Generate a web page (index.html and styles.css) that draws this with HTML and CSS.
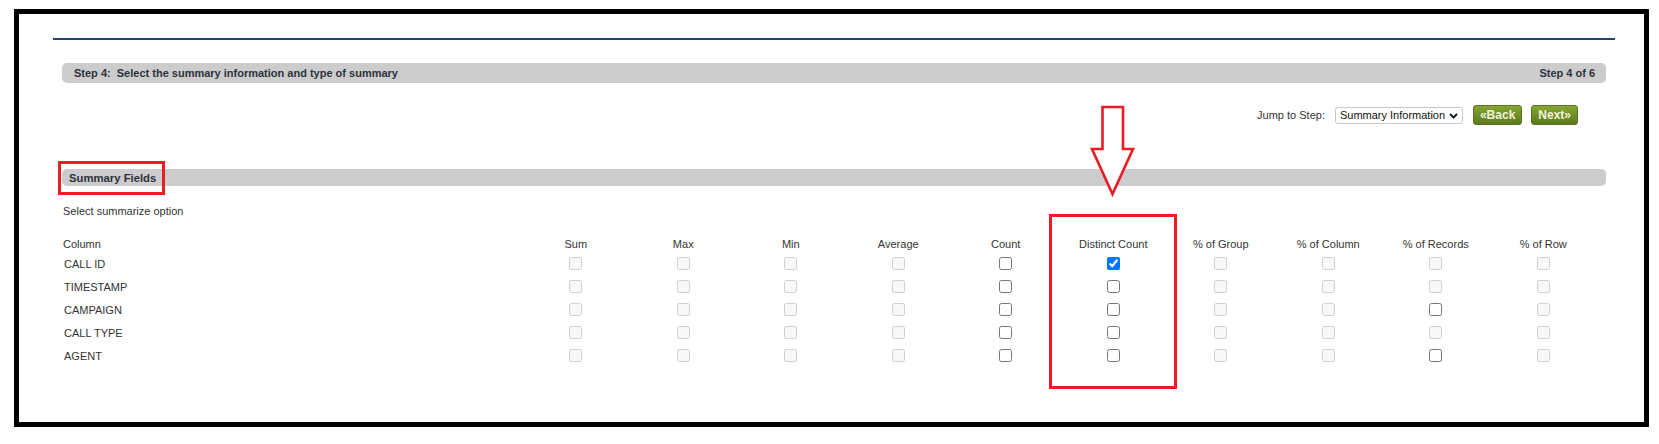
FILE: index.html
```html
<!DOCTYPE html>
<html lang="en">
<head>
<meta charset="utf-8">
<title>Summary Information</title>
<link rel="stylesheet" href="styles.css">
</head>
<body>
<div class="frame">
  <div class="rule"></div>
  <div class="content">
    <div class="bar step-bar">
      <span>Step 4:&nbsp; Select the summary information and type of summary</span>
      <span>Step 4 of 6</span>
    </div>
    <div class="jump-row">
      <label class="jump-label" for="jump">Jump to Step:</label>
      <div class="select-wrap">
        <select id="jump" class="jump-select">
          <option>Summary Information</option>
        </select>
        <svg class="chevron" width="9" height="6" viewBox="0 0 9 6">
          <path d="M1 1 L4.5 4.5 L8 1" fill="none" stroke="#111111" stroke-width="1.8"/>
        </svg>
      </div>
      <button class="btn">«Back</button>
      <button class="btn">Next»</button>
    </div>
    <div class="bar section-bar">Summary Fields</div>
    <p class="hint">Select summarize option</p>
    <div class="grid">
      <div class="hd label">Column</div>
      <div class="hd">Sum</div>
      <div class="hd">Max</div>
      <div class="hd">Min</div>
      <div class="hd">Average</div>
      <div class="hd">Count</div>
      <div class="hd">Distinct Count</div>
      <div class="hd">% of Group</div>
      <div class="hd">% of Column</div>
      <div class="hd">% of Records</div>
      <div class="hd">% of Row</div>

      <div class="cell label name">CALL ID</div>
      <div class="cell"><input type="checkbox" disabled></div>
      <div class="cell"><input type="checkbox" disabled></div>
      <div class="cell"><input type="checkbox" disabled></div>
      <div class="cell"><input type="checkbox" disabled></div>
      <div class="cell"><input type="checkbox"></div>
      <div class="cell"><input type="checkbox" checked></div>
      <div class="cell"><input type="checkbox" disabled></div>
      <div class="cell"><input type="checkbox" disabled></div>
      <div class="cell"><input type="checkbox" disabled></div>
      <div class="cell"><input type="checkbox" disabled></div>

      <div class="cell label name">TIMESTAMP</div>
      <div class="cell"><input type="checkbox" disabled></div>
      <div class="cell"><input type="checkbox" disabled></div>
      <div class="cell"><input type="checkbox" disabled></div>
      <div class="cell"><input type="checkbox" disabled></div>
      <div class="cell"><input type="checkbox"></div>
      <div class="cell"><input type="checkbox"></div>
      <div class="cell"><input type="checkbox" disabled></div>
      <div class="cell"><input type="checkbox" disabled></div>
      <div class="cell"><input type="checkbox" disabled></div>
      <div class="cell"><input type="checkbox" disabled></div>

      <div class="cell label name">CAMPAIGN</div>
      <div class="cell"><input type="checkbox" disabled></div>
      <div class="cell"><input type="checkbox" disabled></div>
      <div class="cell"><input type="checkbox" disabled></div>
      <div class="cell"><input type="checkbox" disabled></div>
      <div class="cell"><input type="checkbox"></div>
      <div class="cell"><input type="checkbox"></div>
      <div class="cell"><input type="checkbox" disabled></div>
      <div class="cell"><input type="checkbox" disabled></div>
      <div class="cell"><input type="checkbox"></div>
      <div class="cell"><input type="checkbox" disabled></div>

      <div class="cell label name">CALL TYPE</div>
      <div class="cell"><input type="checkbox" disabled></div>
      <div class="cell"><input type="checkbox" disabled></div>
      <div class="cell"><input type="checkbox" disabled></div>
      <div class="cell"><input type="checkbox" disabled></div>
      <div class="cell"><input type="checkbox"></div>
      <div class="cell"><input type="checkbox"></div>
      <div class="cell"><input type="checkbox" disabled></div>
      <div class="cell"><input type="checkbox" disabled></div>
      <div class="cell"><input type="checkbox" disabled></div>
      <div class="cell"><input type="checkbox" disabled></div>

      <div class="cell label name">AGENT</div>
      <div class="cell"><input type="checkbox" disabled></div>
      <div class="cell"><input type="checkbox" disabled></div>
      <div class="cell"><input type="checkbox" disabled></div>
      <div class="cell"><input type="checkbox" disabled></div>
      <div class="cell"><input type="checkbox"></div>
      <div class="cell"><input type="checkbox"></div>
      <div class="cell"><input type="checkbox" disabled></div>
      <div class="cell"><input type="checkbox" disabled></div>
      <div class="cell"><input type="checkbox"></div>
      <div class="cell"><input type="checkbox" disabled></div>
    </div>
  </div>
</div>

<div class="mark mark-fields"></div>
<div class="mark mark-distinct"></div>
<svg class="arrow" width="50" height="95" viewBox="0 0 50 95">
  <polygon points="14.5,4 35,4 35,46 45,46 24.5,91 4,46 14.5,46" fill="#ffffff" stroke="#ec1c24" stroke-width="2.6" stroke-linejoin="miter"/>
</svg>
</body>
</html>
```

FILE: styles.css
```css
html, body {
  margin: 0;
  padding: 0;
  background: #ffffff;
}

body {
  font-family: "Liberation Sans", Arial, sans-serif;
  font-size: 11px;
  color: #333333;
}

.frame {
  box-sizing: border-box;
  margin: 9px 0 0 14px;
  width: 1635px;
  height: 418px;
  border: 5px solid #000000;
  background: #ffffff;
}

.rule {
  margin: 24px 0 0 34px;
  width: 1562px;
  height: 2px;
  background: #22466a;
}

.content {
  margin-left: 43px;
  width: 1544px;
}

.bar {
  box-sizing: border-box;
  background: #cccccc;
  border-radius: 5px;
  font-weight: bold;
  color: #2e323c;
  display: flex;
  align-items: center;
}

.step-bar {
  margin-top: 23px;
  height: 20px;
  padding: 0 11px 0 12px;
  justify-content: space-between;
  font-size: 11px;
}

.jump-row {
  margin-top: 22px;
  height: 20px;
  display: flex;
  align-items: center;
  justify-content: flex-end;
  padding-right: 28px;
  gap: 10px;
}

.jump-label {
  color: #333333;
  font-size: 11px;
}

.select-wrap {
  position: relative;
  width: 128px;
  height: 17px;
}

.jump-select {
  box-sizing: border-box;
  -webkit-appearance: none;
  appearance: none;
  width: 128px;
  height: 17px;
  font-family: "Liberation Sans", Arial, sans-serif;
  font-size: 11px;
  line-height: 15px;
  color: #111111;
  background: #ffffff;
  border: 1px solid #c8c8c8;
  border-radius: 3px;
  padding: 0 14px 0 4px;
  margin: 0;
}

.chevron {
  position: absolute;
  right: 5px;
  top: 6px;
  pointer-events: none;
}

.btn {
  box-sizing: border-box;
  height: 20px;
  padding: 0 6px;
  font-family: "Liberation Sans", Arial, sans-serif;
  font-size: 12px;
  font-weight: bold;
  color: #eef3dc;
  background: linear-gradient(#86a533, #5c7a1b);
  border: 1px solid #5a7520;
  border-radius: 3px;
}

.btn + .btn {
  margin-left: -1px;
}

.section-bar {
  margin-top: 44px;
  height: 17px;
  padding-left: 7px;
  font-size: 11.3px;
}

.hint {
  margin: 18px 0 0 1px;
  height: 14px;
  line-height: 14px;
}

.grid {
  margin-top: 17px;
  display: grid;
  grid-template-columns: 460px repeat(10, 107.5px);
  grid-template-rows: 17px repeat(5, 23px);
  align-items: center;
}

.hd {
  text-align: center;
  line-height: 14px;
}

.hd.label {
  text-align: left;
  padding-left: 1px;
}

.cell {
  display: flex;
  justify-content: center;
  align-items: center;
  height: 23px;
}

.cell.label {
  justify-content: flex-start;
  padding-left: 2px;
}

.cell input {
  margin: 0;
  width: 13px;
  height: 13px;
}

.mark {
  position: absolute;
  box-sizing: border-box;
  border: 3px solid #ec1c24;
}

.mark-fields {
  left: 58px;
  top: 161px;
  width: 107px;
  height: 34px;
}

.mark-distinct {
  left: 1049px;
  top: 214px;
  width: 128px;
  height: 175px;
}

.arrow {
  position: absolute;
  left: 1088px;
  top: 103px;
}
```
